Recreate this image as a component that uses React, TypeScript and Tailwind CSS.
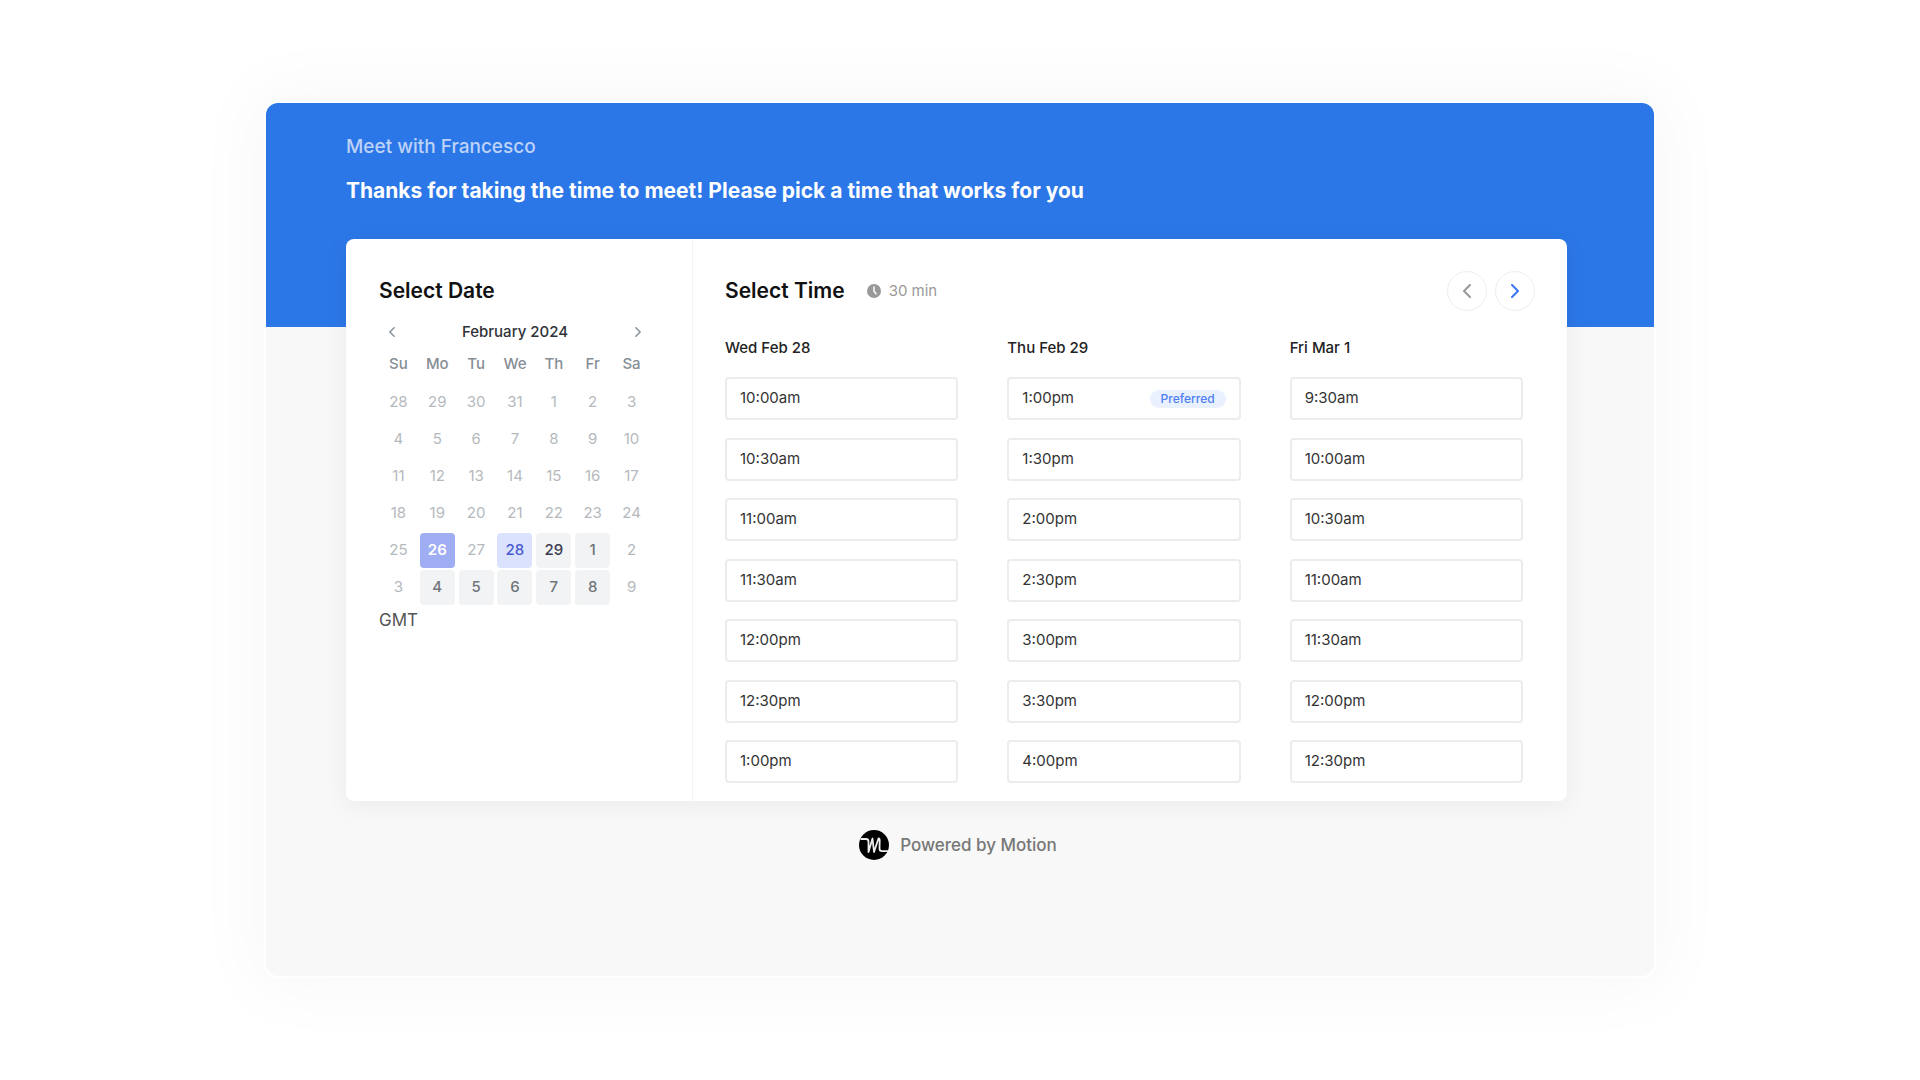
import { useState } from 'react'
import clsx from 'clsx'

const WEEKDAYS = ['Su', 'Mo', 'Tu', 'We', 'Th', 'Fr', 'Sa']

const WEEKS = [
  [28, 29, 30, 31, 1, 2, 3],
  [4, 5, 6, 7, 8, 9, 10],
  [11, 12, 13, 14, 15, 16, 17],
  [18, 19, 20, 21, 22, 23, 24],
  [25, 26, 27, 28, 29, 1, 2],
  [3, 4, 5, 6, 7, 8, 9],
]

// keyed by week-day index
const DAY_STYLES: Record<string, string> = {
  '4-1': 'bg-[#9fadf2] text-white font-semibold',
  '4-3': 'bg-[#dae2fe] text-[#4a5bd0] font-medium',
  '4-4': 'bg-[#f1f3f5] text-[#3b3b4f] font-medium',
  '4-5': 'bg-[#f1f3f5] text-[#70757b] font-medium',
  '5-1': 'bg-[#f1f3f5] text-[#70757b] font-medium',
  '5-2': 'bg-[#f1f3f5] text-[#70757b] font-medium',
  '5-3': 'bg-[#f1f3f5] text-[#70757b] font-medium',
  '5-4': 'bg-[#f1f3f5] text-[#70757b] font-medium',
  '5-5': 'bg-[#f1f3f5] text-[#70757b] font-medium',
}

const DAYS = [
  { label: 'Wed Feb 28', slots: ['10:00am', '10:30am', '11:00am', '11:30am', '12:00pm', '12:30pm', '1:00pm'] },
  { label: 'Thu Feb 29', preferred: '1:00pm', slots: ['1:00pm', '1:30pm', '2:00pm', '2:30pm', '3:00pm', '3:30pm', '4:00pm'] },
  { label: 'Fri Mar 1', slots: ['9:30am', '10:00am', '10:30am', '11:00am', '11:30am', '12:00pm', '12:30pm'] },
]

function Chevron({ dir, className }: { dir: 'left' | 'right'; className: string }) {
  return (
    <svg viewBox="0 0 8 14" fill="none" stroke="currentColor" strokeWidth="2" strokeLinecap="round" strokeLinejoin="round" className={className}>
      <path d={dir === 'left' ? 'M7 1 1 7l6 6' : 'M1 1l6 6-6 6'} />
    </svg>
  )
}

function Calendar() {
  return (
    <section className="w-[347px] shrink-0 border-r border-[#f3f3f3] pl-[33px] pr-[41px] pt-9">
      <h2 className="text-[21px] leading-8 font-semibold text-[#111]">Select Date</h2>
      <div className="mt-3 flex h-[26px] items-center justify-between px-[10px]">
        <button aria-label="Previous month" className="text-[#868e96]">
          <Chevron dir="left" className="h-[10px] w-[6px]" />
        </button>
        <p className="text-[15px] font-medium text-[#2f3338]">February 2024</p>
        <button aria-label="Next month" className="text-[#868e96]">
          <Chevron dir="right" className="h-[10px] w-[6px]" />
        </button>
      </div>
      <table className="w-full table-fixed text-center text-[15px]">
        <thead>
          <tr className="h-[39px]">
            {WEEKDAYS.map(d => (
              <th key={d} className="p-0 font-medium text-[#868e96]">{d}</th>
            ))}
          </tr>
        </thead>
        <tbody>
          {WEEKS.map((week, w) => (
            <tr key={w} className="h-[37px]">
              {week.map((day, d) => (
                <td key={d} className="p-0">
                  <button className={clsx('size-[35px] rounded align-middle', DAY_STYLES[`${w}-${d}`] || 'text-[#b5b9bd]')}>
                    {day}
                  </button>
                </td>
              ))}
            </tr>
          ))}
        </tbody>
      </table>
      <p className="text-[17px] leading-7 text-[#555]">GMT</p>
    </section>
  )
}

export default function App() {
  const [selected, setSelected] = useState('')

  return (
    <div className="min-h-screen bg-white px-6 py-[101px] font-['Inter','Liberation_Sans',sans-serif]">
      <main className="mx-auto max-w-[1392px] overflow-hidden rounded-[14px] border-2 border-white bg-[#f8f8f8] pb-[115px] shadow-[0_0_70px_12px_rgba(0,0,0,0.03)]">
        <header className="-mb-[88px] h-[224px] bg-[#2c77e7] pl-20 pt-7">
          <p className="text-[19px] leading-8 font-medium text-[#bdd2f7]">Meet with Francesco</p>
          <h1 className="mt-3 text-[21px] leading-8 font-bold text-white">
            Thanks for taking the time to meet! Please pick a time that works for you
          </h1>
        </header>

        <div className="relative mr-[87px] ml-20 flex min-h-[562px] rounded-lg bg-white shadow-[0_4px_24px_rgba(0,0,0,0.06)]">
          <Calendar />

          <section className="flex flex-1 flex-col pt-8 pb-[18px] pl-8">
            <div className="flex items-center pr-8">
              <h2 className="text-[21px] leading-8 font-semibold text-[#111]">Select Time</h2>
              <p className="ml-[22px] flex items-center gap-2 text-[15px] text-[#999]">
                <svg viewBox="0 0 14 14" className="size-[14px]">
                  <circle cx="7" cy="7" r="7" fill="#999" />
                  <path d="M7 3v4.2l2 2.6" fill="none" stroke="#fff" strokeWidth="1.5" strokeLinecap="round" />
                </svg>
                30 min
              </p>
              <div className="ml-auto flex gap-2">
                <button aria-label="Previous days" className="flex size-10 items-center justify-center rounded-full border border-[#eee] text-[#999]">
                  <Chevron dir="left" className="h-[14px] w-2" />
                </button>
                <button aria-label="Next days" className="flex size-10 items-center justify-center rounded-full border border-[#eee] text-[#3b75f0]">
                  <Chevron dir="right" className="h-[14px] w-2" />
                </button>
              </div>
            </div>

            <div className="mt-6 grid flex-1 grid-cols-3 gap-x-[49px] pr-11">
              {DAYS.map(day => (
                <div key={day.label} className="flex flex-col">
                  <h3 className="mb-4 text-[15px] leading-[26px] font-medium text-[#222]">{day.label}</h3>
                  <div className="flex flex-1 flex-col justify-between">
                    {day.slots.map(slot => (
                      <button key={slot} onClick={() => setSelected(`${day.label} ${slot}`)}
                        className={clsx(
                          'flex h-[43px] items-center justify-between rounded border-2 px-[13px] text-[15px] text-[#333]',
                          selected === `${day.label} ${slot}` ? 'border-[#3b75f0]' : 'border-[#ececec]'
                        )}>
                        {slot}
                        {day.preferred === slot && (
                          <span className="rounded-full bg-[#e9f0fe] px-[11px] text-xs leading-[18px] font-medium text-[#4c80f2]">Preferred</span>
                        )}
                      </button>
                    ))}
                  </div>
                </div>
              ))}
            </div>
          </section>
        </div>

        <footer className="mt-7 mr-1 flex items-center justify-center gap-[11px]">
          <svg viewBox="0 0 30 30" className="size-[30px]">
            <circle cx="15" cy="15" r="15" fill="#000" />
            <path d="M1.500 9H7c2 0 2.500 1 2.500 2.500V22L13.500 8.500 15 22l4.500-13.500c1 0 1.200.800 1.200 1.500l-.2 8.500c0 1.700.8 2.700 2.500 2.700h6"
              fill="none" stroke="#eee" strokeWidth="1.800" strokeLinejoin="round" />
          </svg>
          <p className="text-[17px] leading-8 font-medium text-[#777]">Powered by Motion</p>
        </footer>
      </main>
    </div>
  )
}
